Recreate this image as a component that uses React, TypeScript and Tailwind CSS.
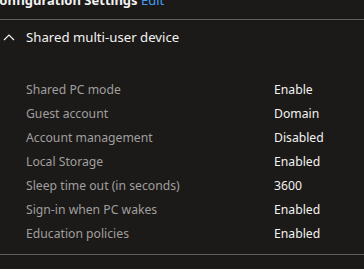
const rows: [string, string][] = [
  ["Shared PC mode", "Enable"],
  ["Guest account", "Domain"],
  ["Account management", "Disabled"],
  ["Local Storage", "Enabled"],
  ["Sleep time out (in seconds)", "3600"],
  ["Sign-in when PC wakes", "Enabled"],
  ["Education policies", "Enabled"],
];

export default function App() {
  return (
    <div
      className="w-[364px] h-[269px] overflow-hidden bg-[#1b1a19] text-[#f3f2f1]"
      style={{ fontFamily: '"Noto Sans", "Open Sans", sans-serif' }}
    >
      <div className="-mt-[10px] h-[30px] border-b border-[#605e5c] flex items-start">
        <h2 className="-ml-[9px] text-[13px] leading-[20px] font-bold whitespace-nowrap">
          Configuration Settings <span className="text-[13px] font-normal text-[#479ef5]">Edit</span>
        </h2>
      </div>

      <div className="flex items-center h-[34px]">
        <svg width="12" height="8" viewBox="0 0 12 8" className="ml-[3px] mr-[11px]">
          <path d="M1 7 L6 2 L11 7" stroke="#f3f2f1" strokeWidth="1.2" fill="none" />
        </svg>
        <span className="text-[13.2px] leading-[20px]">Shared multi-user device</span>
      </div>

      <div className="mt-[24px] pl-[26px] pb-[8px] border-b border-[#605e5c]">
        {rows.map(([label, value]) => (
          <div key={label} className="flex h-[24px] items-center text-[12.2px]">
            <span className="w-[248px] text-[#a19f9d]">{label}</span>
            <span className="text-[#f3f2f1]">{value}</span>
          </div>
        ))}
      </div>
    </div>
  );
}
